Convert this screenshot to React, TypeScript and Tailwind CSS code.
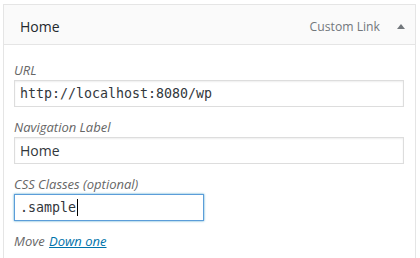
const sans = "font-['Open_Sans','Noto_Sans',sans-serif]";
const mono = "font-['DejaVu_Sans_Mono','Liberation_Mono',monospace]";

function Field({
  label,
  value,
  isMono,
  focused,
  narrow,
}: {
  label: string;
  value: string;
  isMono?: boolean;
  focused?: boolean;
  narrow?: boolean;
}) {
  return (
    <div className="mb-[11px]">
      <div className="h-[18px] text-[13px] leading-[18px] italic text-[#666]">{label}</div>
      <div
        className={[
          "mt-[1px] flex h-[27px] items-center border bg-white pl-[5px] text-[#32373c]",
          narrow ? "w-[190px]" : "w-[390px]",
          focused
            ? "border-[#5b9dd9] shadow-[0_0_2px_rgba(30,140,190,0.8)]"
            : "border-[#ddd] shadow-[inset_0_1px_2px_rgba(0,0,0,0.07)]",
          isMono ? `${mono} text-[13.3px]` : "text-[14px]",
        ].join(" ")}
      >
        <span>{value}</span>
        {focused && <span className="ml-[1px] h-[17px] w-[1px] bg-black" />}
      </div>
    </div>
  );
}

export default function App() {
  return (
    <div className={`h-[258px] w-[420px] overflow-hidden bg-white pl-[3px] pt-[4px] ${sans}`}>
      <div className="h-[260px] w-[413px] border border-b-0 border-[#e5e5e5] bg-white">
        {/* Item header */}
        <div className="flex h-[40px] items-start justify-between border-b border-[#e5e5e5] bg-[#fafafa] pl-[16px] pr-[10px] pt-[12px]">
          <span className="text-[14px] leading-[20px] text-[#23282d]">Home</span>
          <div className="flex items-center">
            <span className="text-[12.2px] leading-[20px] text-[#72777c]">Custom Link</span>
            <svg width="8" height="5" viewBox="0 0 8 5" className="ml-[17px] mt-[-1px]">
              <path d="M0 5 L4 0 L8 5 Z" fill="#72777c" />
            </svg>
          </div>
        </div>

        {/* Settings */}
        <div className="pl-[10px] pt-[16px]">
          <Field label="URL" value="http://localhost:8080/wp" isMono />
          <Field label="Navigation Label" value="Home" />
          <Field label="CSS Classes (optional)" value=".sample" isMono focused narrow />
          <div className="h-[18px] text-[13px] leading-[18px] italic text-[#666]">
            Move{" "}
            <a href="#" className="ml-[1px] text-[#0073aa] underline">
              Down one
            </a>
          </div>
        </div>
      </div>
    </div>
  );
}
